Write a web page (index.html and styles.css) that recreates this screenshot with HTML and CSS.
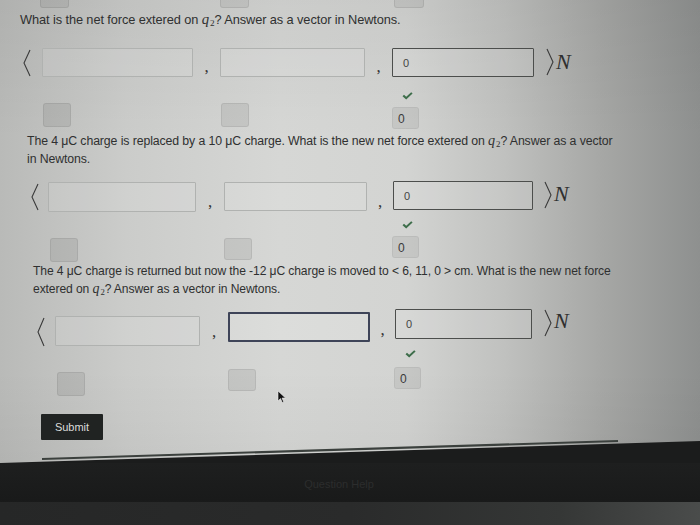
FILE: index.html
```html
<!DOCTYPE html>
<html>
<head>
<meta charset="utf-8">
<link rel="stylesheet" href="styles.css">
</head>
<body>
<div class="screen">
  <div class="stubs">
    <div class="stub s1"></div>
    <div class="stub s2"></div>
    <div class="stub s3"></div>
  </div>

  <p class="q q1">What is the net force extered on <span class="var">q</span><sub class="idx">2</sub>? Answer as a vector in Newtons.</p>

  <div class="row r1">
    <svg class="lb" width="10" height="28" viewBox="0 0 10 28"><polyline points="8,1 2,14 8,27" fill="none" stroke="#3a3a3a" stroke-width="1.1"/></svg>
    <div class="box b1"></div>
    <span class="comma">,</span>
    <div class="box b2"></div>
    <span class="comma">,</span>
    <div class="box b3 filled">0</div>
    <svg class="rb" width="10" height="28" viewBox="0 0 10 28"><polyline points="2,1 8,14 2,27" fill="none" stroke="#3a3a3a" stroke-width="1.1"/></svg>
    <span class="unit">N</span>
  </div>
  <div class="fb fb1">
    <div class="col c1"><div class="sq"></div></div>
    <div class="col c2"><div class="sq"></div></div>
    <div class="col c3">
      <svg class="check" width="11" height="8" viewBox="0 0 11 8"><path d="M0.5 4.2 L2 2.8 L4.2 4.8 L9.2 0.2 L10.6 1.5 L4.2 7.6 Z" fill="#3e6e4b"/></svg>
      <div class="zero">0</div>
    </div>
  </div>

  <p class="q q2">The 4 μC charge is replaced by a 10 μC charge. What is the new net force extered on <span class="var">q</span><sub class="idx">2</sub>? Answer as a vector<br>in Newtons.</p>

  <div class="row r2">
    <svg class="lb" width="10" height="28" viewBox="0 0 10 28"><polyline points="8,1 2,14 8,27" fill="none" stroke="#3a3a3a" stroke-width="1.1"/></svg>
    <div class="box b1"></div>
    <span class="comma">,</span>
    <div class="box b2"></div>
    <span class="comma">,</span>
    <div class="box b3 filled">0</div>
    <svg class="rb" width="10" height="28" viewBox="0 0 10 28"><polyline points="2,1 8,14 2,27" fill="none" stroke="#3a3a3a" stroke-width="1.1"/></svg>
    <span class="unit">N</span>
  </div>
  <div class="fb fb2">
    <div class="col c1"><div class="sq"></div></div>
    <div class="col c2"><div class="sq"></div></div>
    <div class="col c3">
      <svg class="check" width="11" height="8" viewBox="0 0 11 8"><path d="M0.5 4.2 L2 2.8 L4.2 4.8 L9.2 0.2 L10.6 1.5 L4.2 7.6 Z" fill="#3e6e4b"/></svg>
      <div class="zero">0</div>
    </div>
  </div>

  <p class="q q3">The 4 μC charge is returned but now the -12 μC charge is moved to &lt; 6, 11, 0 &gt; cm. What is the new net force<br>extered on <span class="var">q</span><sub class="idx">2</sub>? Answer as a vector in Newtons.</p>

  <div class="row r3">
    <svg class="lb" width="10" height="30" viewBox="0 0 10 30"><polyline points="8,1 2,15 8,29" fill="none" stroke="#3a3a3a" stroke-width="1.1"/></svg>
    <div class="box b1"></div>
    <span class="comma">,</span>
    <div class="box b2 focus"></div>
    <span class="comma">,</span>
    <div class="box b3 filled">0</div>
    <svg class="rb" width="10" height="28" viewBox="0 0 10 28"><polyline points="2,1 8,14 2,27" fill="none" stroke="#3a3a3a" stroke-width="1.1"/></svg>
    <span class="unit">N</span>
  </div>
  <div class="fb fb3">
    <div class="col c1"><div class="sq"></div></div>
    <div class="col c2"><div class="sq"></div></div>
    <div class="col c3">
      <svg class="check" width="11" height="8" viewBox="0 0 11 8"><path d="M0.5 4.2 L2 2.8 L4.2 4.8 L9.2 0.2 L10.6 1.5 L4.2 7.6 Z" fill="#3e6e4b"/></svg>
      <div class="zero">0</div>
    </div>
  </div>

  <button class="submit">Submit</button>
  <svg class="rule" width="700" height="21" viewBox="0 0 700 21"><line x1="42" y1="19" x2="618" y2="1" stroke="#3b403d" stroke-width="2"/></svg>

  <svg class="cursor" width="10" height="14" viewBox="0 0 10 14"><path d="M1 1 L1 11 L3.5 8.6 L5.3 12.6 L6.8 12 L5 8.1 L8.5 8 Z" fill="#111" stroke="#eee" stroke-width="0.6"/></svg>
</div>
<div class="bezel">
  <div class="help">Question Help</div>
  <div class="band"></div>
</div>
</body>
</html>
```
FILE: styles.css
```css
html, body {
  margin: 0;
  padding: 0;
}
body {
  width: 700px;
  height: 525px;
  overflow: hidden;
  background: #1b1c1c;
  font-family: "Liberation Sans", Arial, sans-serif;
  color: #2f3030;
}
.screen {
  position: relative;
  height: 463px;
  background:
    linear-gradient(180deg, rgba(0,0,0,0.05) 0%, rgba(0,0,0,0) 30%, rgba(0,0,0,0) 80%, rgba(0,0,0,0.04) 100%),
    linear-gradient(90deg, #b9bab8 0%, #cbccca 18%, #d6d7d5 40%, #d3d4d2 58%, #c0c1bf 72%, #a6a7a5 86%, #8e908f 100%);
  clip-path: polygon(0 0, 100% 0, 100% 441px, 0 463px);
  overflow: hidden;
}
.stubs {
  display: flex;
  height: 8px;
}
.stub {
  height: 7px;
  background: rgba(0,0,0,0.06);
  border: 1px solid rgba(0,0,0,0.08);
  border-top: none;
  border-radius: 0 0 3px 3px;
}
.s1 { margin-left: 40px; width: 27px; }
.s2 { margin-left: 151px; width: 27px; }
.s3 { margin-left: 145px; width: 28px; }

.q {
  margin: 0;
  letter-spacing: -0.1px;
}
.q1 {
  margin-top: 4px;
  margin-left: 20px;
  font-size: 12.8px;
  line-height: 16px;
}
.q2 {
  margin-top: 4px;
  margin-left: 27px;
  width: 620px;
  font-size: 12.3px;
  line-height: 17.5px;
}
.q3 {
  margin-top: 0;
  margin-left: 33px;
  width: 620px;
  font-size: 12.1px;
  line-height: 18px;
}
.var {
  font-family: "Liberation Serif", "Times New Roman", serif;
  font-style: italic;
  font-size: 1.15em;
  line-height: 0;
  letter-spacing: 0;
  padding-right: 1px;
}
.idx {
  font-family: "Liberation Serif", "Times New Roman", serif;
  font-size: 0.72em;
  vertical-align: -0.2em;
  line-height: 0;
}

.row {
  display: flex;
  align-items: flex-start;
}
.lb { margin-right: 10px; }
.box {
  box-sizing: border-box;
  height: 29px;
  border: 1.5px solid #b0b2b0;
  background: rgba(255,255,255,0.1);
  border-radius: 1px;
}
.box.filled {
  border: 1.5px solid #4c4e4c;
  font-size: 11px;
  padding: 8px 0 0 10px;
  color: #444;
}
.box.focus {
  border: 2px solid #3e4458;
  background: rgba(255,255,255,0.15);
}
.comma {
  font-family: "Liberation Serif", serif;
  font-size: 17px;
  color: #333;
  text-align: center;
  padding-top: 10px;
  line-height: 17px;
}
.rb { margin-left: 11px; }
.unit {
  font-family: "Liberation Serif", "Times New Roman", serif;
  font-style: italic;
  font-size: 22px;
  line-height: 24px;
  color: #2f2f2f;
  margin-left: 1px;
}

.r1 { margin-top: 20px; margin-left: 22px; }
.r1 .lb { margin-top: 1px; }
.r1 .b1 { width: 151px; }
.r1 .comma { width: 27px; }
.r1 .b2 { width: 145px; }
.r1 .b3 { width: 142px; }
.r1 .unit { margin-top: 2px; }

.r2 { margin-top: 13px; margin-left: 30px; }
.r2 .lb { margin-top: 2px; margin-right: 8px; }
.r2 .b1 { width: 148px; height: 30px; margin-top: 1px; }
.r2 .comma { width: 28px; padding-top: 12px; }
.r2 .comma + .b2 { width: 143px; margin-top: 1px; }
.r2 .b2 + .comma { width: 26px; }
.r2 .b3 { width: 140px; }
.r2 .rb { margin-left: 10px; }
.r2 .unit { margin-top: 1px; }

.r3 { margin-top: 11px; margin-left: 36px; }
.r3 .lb { margin-top: 8px; margin-right: 9px; }
.r3 .b1 { width: 145px; height: 30px; margin-top: 7px; }
.r3 .comma { width: 28px; padding-top: 14px; }
.r3 .b2 { width: 142px; height: 30px; margin-top: 3px; }
.r3 .b2 + .comma { width: 25px; padding-top: 12px; }
.r3 .b3 { width: 137px; height: 30px; }
.r3 .unit { margin-top: 0; }

.fb {
  display: flex;
  align-items: flex-end;
}
.col { flex: none; }
.sq {
  width: 28px;
  height: 24px;
  box-sizing: border-box;
  background: rgba(0,0,0,0.07);
  border: 1px solid rgba(0,0,0,0.07);
  border-radius: 3px;
}
.c3 {
  display: flex;
  flex-direction: column;
  align-items: flex-start;
}
.check {
  margin-left: 10px;
  margin-bottom: 7px;
}
.zero {
  box-sizing: border-box;
  width: 27px;
  height: 22px;
  background: rgba(0,0,0,0.06);
  border: 1px solid rgba(0,0,0,0.05);
  border-radius: 3px;
  font-size: 12px;
  color: #3a3a3a;
  padding: 4px 0 0 5px;
}

.fb1 { margin-top: 15px; margin-left: 43px; }
.fb1 .c1 { width: 178px; }
.fb1 .c2 { width: 171px; }
.fb1 .sq { margin-bottom: 2px; }

.fb2 { margin-top: 9px; margin-left: 50px; }
.fb2 .c1 { width: 174px; }
.fb2 .c2 { width: 168px; }
.fb2 .c2 .sq { margin-bottom: 2px; height: 22px; }
.fb2 .zero { margin-bottom: 4px; }

.fb3 { margin-top: 3px; margin-left: 57px; }
.fb3 .c1 { width: 171px; }
.fb3 .c2 { width: 166px; }
.fb3 .c2 .sq { margin-bottom: 5px; height: 22px; }
.fb3 .check { margin-left: 11px; margin-bottom: 9px; }
.fb3 .zero { margin-bottom: 7px; }

.submit {
  display: block;
  margin: 18px 0 0 41px;
  width: 62px;
  height: 26px;
  padding: 0;
  border: none;
  border-radius: 1px;
  background: #202322;
  color: #dcdcdc;
  font-family: "Liberation Sans", Arial, sans-serif;
  font-size: 11px;
}
.rule {
  display: block;
}
.cursor {
  position: absolute;
  left: 277px;
  top: 390px;
}

.bezel {
  height: 62px;
  background: linear-gradient(180deg, #1e1f1f 0%, #191a1a 60%, #222323 100%);
  display: flex;
  flex-direction: column;
}
.help {
  margin-top: 15px;
  text-align: center;
  font-size: 11px;
  color: #2c2d2d;
  padding-right: 22px;
  height: 22px;
}
.band {
  margin-top: 2px;
  flex: 1;
  background: linear-gradient(90deg, #262727 0%, #2a2b2b 50%, #353736 80%, #4a4c4b 100%);
}
```
